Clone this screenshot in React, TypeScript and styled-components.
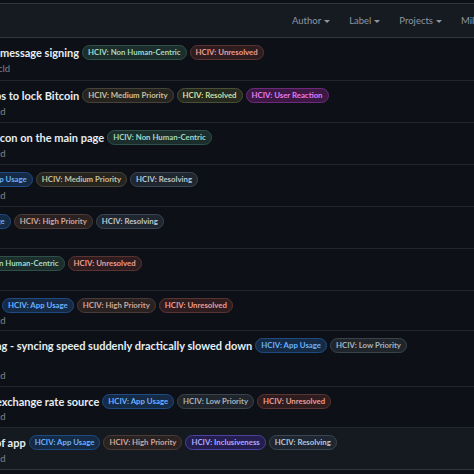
import React from 'react';
import styled, { createGlobalStyle } from 'styled-components';

const GlobalStyle = createGlobalStyle`
  html, body {
    margin: 0;
    padding: 0;
    background-color: #0d1117;
  }
  body {
    font-family: Lato, "Noto Sans", "Liberation Sans", sans-serif;
    color: #e6edf3;
    overflow: hidden;
  }
`;

type Tone =
  | 'nonHuman'
  | 'unresolved'
  | 'medium'
  | 'resolved'
  | 'reaction'
  | 'appUsage'
  | 'high'
  | 'resolving'
  | 'low'
  | 'inclusive';

const tones: Record<Tone, { fg: string; bg: string; border: string }> = {
  nonHuman: { fg: '#a3d9c6', bg: '#1b2e2b', border: '#2f5048' },
  unresolved: { fg: '#e89c94', bg: '#2e1c1f', border: '#5a3433' },
  medium: { fg: '#c9c09e', bg: '#25241f', border: '#47433a' },
  resolved: { fg: '#d5dc9f', bg: '#26291e', border: '#4a4f37' },
  reaction: { fg: '#e57af4', bg: '#3b1943', border: '#6d2a7b' },
  appUsage: { fg: '#6cb1ff', bg: '#152a45', border: '#1f4b82' },
  high: { fg: '#cba69e', bg: '#2a2121', border: '#4a3a38' },
  resolving: { fg: '#b8c5d3', bg: '#1f262f', border: '#3a4653' },
  low: { fg: '#a8b2ba', bg: '#1f252b', border: '#3a434b' },
  inclusive: { fg: '#aea8ff', bg: '#231e4d', border: '#4a41a0' },
};

const Page = styled.div`
  padding-top: 3px;
  width: 474px;
  height: 474px;
  overflow: hidden;
`;

const Box = styled.div`
  border-top: 1px solid #30363d;
  border-bottom: 1px solid #30363d;
`;

const Header = styled.div`
  display: flex;
  align-items: center;
  height: 33px;
  padding-left: 292px;
  gap: 19px;
  background-color: #161b22;
  border-bottom: 1px solid #30363d;
  white-space: nowrap;
`;

const Filter = styled.span`
  display: inline-flex;
  align-items: center;
  gap: 3px;
  font-size: 9.5px;
  color: #8d96a0;
`;

const Caret = styled.span`
  width: 0;
  height: 0;
  margin-top: 1px;
  border-left: 3px solid transparent;
  border-right: 3px solid transparent;
  border-top: 3px solid #8d96a0;
`;

const Row = styled.div<{ $height: number; $hover?: boolean }>`
  display: flex;
  flex-direction: column;
  height: ${({ $height }) => $height}px;
  padding-top: 6px;
  box-sizing: border-box;
  background-color: ${({ $hover }) => ($hover ? '#151a21' : 'transparent')};
  & + & {
    border-top: 1px solid #21262d;
  }
`;

const TitleLine = styled.div<{ $lead: number }>`
  display: flex;
  align-items: center;
  gap: 3px;
  height: 16px;
  white-space: nowrap;
  & > :first-child {
    margin-left: ${({ $lead }) => $lead}px;
  }
`;

const Title = styled.span`
  font-size: 11px;
  font-weight: 700;
  color: #e6edf3;
`;

const Label = styled.span<{ $tone: Tone }>`
  display: inline-flex;
  align-items: center;
  flex-shrink: 0;
  height: 13px;
  padding: 0 5px;
  border-radius: 999px;
  font-size: 7.8px;
  font-weight: 700;
  color: ${({ $tone }) => tones[$tone].fg};
  background-color: ${({ $tone }) => tones[$tone].bg};
  border: 1px solid ${({ $tone }) => tones[$tone].border};
`;

const Meta = styled.div<{ $gap: number }>`
  margin-top: ${({ $gap }) => $gap}px;
  font-size: 9.5px;
  line-height: 13px;
  color: #7d8590;
  white-space: nowrap;
  & > span {
    margin-left: -2px;
  }
`;

interface Issue {
  title?: string;
  lead: number;
  labels: [string, Tone][];
  meta: string;
  height?: number;
  metaGap?: number;
  hover?: boolean;
}

const issues: Issue[] = [
  {
    title: 'message signing',
    lead: 0,
    labels: [
      ['HCIV: Non Human-Centric', 'nonHuman'],
      ['HCIV: Unresolved', 'unresolved'],
    ],
    meta: 'cld',
  },
  {
    title: 'ps to lock Bitcoin',
    lead: -5,
    labels: [
      ['HCIV: Medium Priority', 'medium'],
      ['HCIV: Resolved', 'resolved'],
      ['HCIV: User Reaction', 'reaction'],
    ],
    meta: 'id',
  },
  {
    title: 'icon on the main page',
    lead: -3,
    labels: [['HCIV: Non Human-Centric', 'nonHuman']],
    meta: 'id',
  },
  {
    lead: -39,
    labels: [
      ['HCIV: App Usage', 'appUsage'],
      ['HCIV: Medium Priority', 'medium'],
      ['HCIV: Resolving', 'resolving'],
    ],
    meta: 'id',
  },
  {
    lead: -61,
    labels: [
      ['HCIV: App Usage', 'appUsage'],
      ['HCIV: High Priority', 'high'],
      ['HCIV: Resolving', 'resolving'],
    ],
    meta: '',
  },
  {
    lead: -40,
    labels: [
      ['HCIV: Non Human-Centric', 'nonHuman'],
      ['HCIV: Unresolved', 'unresolved'],
    ],
    meta: '',
  },
  {
    lead: 2,
    labels: [
      ['HCIV: App Usage', 'appUsage'],
      ['HCIV: High Priority', 'high'],
      ['HCIV: Unresolved', 'unresolved'],
    ],
    meta: 'id',
    height: 40,
    metaGap: 1,
  },
  {
    title: 'ag - syncing speed suddenly dractically slowed down',
    lead: -4,
    labels: [
      ['HCIV: App Usage', 'appUsage'],
      ['HCIV: Low Priority', 'low'],
    ],
    meta: 'id',
    height: 56,
    metaGap: 16,
  },
  {
    title: 'exchange rate source',
    lead: -4,
    labels: [
      ['HCIV: App Usage', 'appUsage'],
      ['HCIV: Low Priority', 'low'],
      ['HCIV: Unresolved', 'unresolved'],
    ],
    meta: 'id',
    height: 41,
    metaGap: 1,
  },
  {
    title: 'of app',
    lead: -5,
    labels: [
      ['HCIV: App Usage', 'appUsage'],
      ['HCIV: High Priority', 'high'],
      ['HCIV: Inclusiveness', 'inclusive'],
      ['HCIV: Resolving', 'resolving'],
    ],
    meta: 'id',
    hover: true,
  },
];

const filters = ['Author', 'Label', 'Projects', 'Milestones'];

export default function App() {
  return (
    <Page>
      <GlobalStyle />
      <Box>
        <Header>
          {filters.map((name) => (
            <Filter key={name}>
              {name}
              <Caret />
            </Filter>
          ))}
        </Header>
        {issues.map((issue, i) => (
          <Row key={i} $height={issue.height ?? 42} $hover={issue.hover}>
            <TitleLine $lead={issue.lead}>
              {issue.title && <Title>{issue.title}</Title>}
              {issue.labels.map(([text, tone]) => (
                <Label key={text} $tone={tone}>
                  {text}
                </Label>
              ))}
            </TitleLine>
            <Meta $gap={issue.metaGap ?? 2}>
              <span>{issue.meta}</span>
            </Meta>
          </Row>
        ))}
      </Box>
    </Page>
  );
}
